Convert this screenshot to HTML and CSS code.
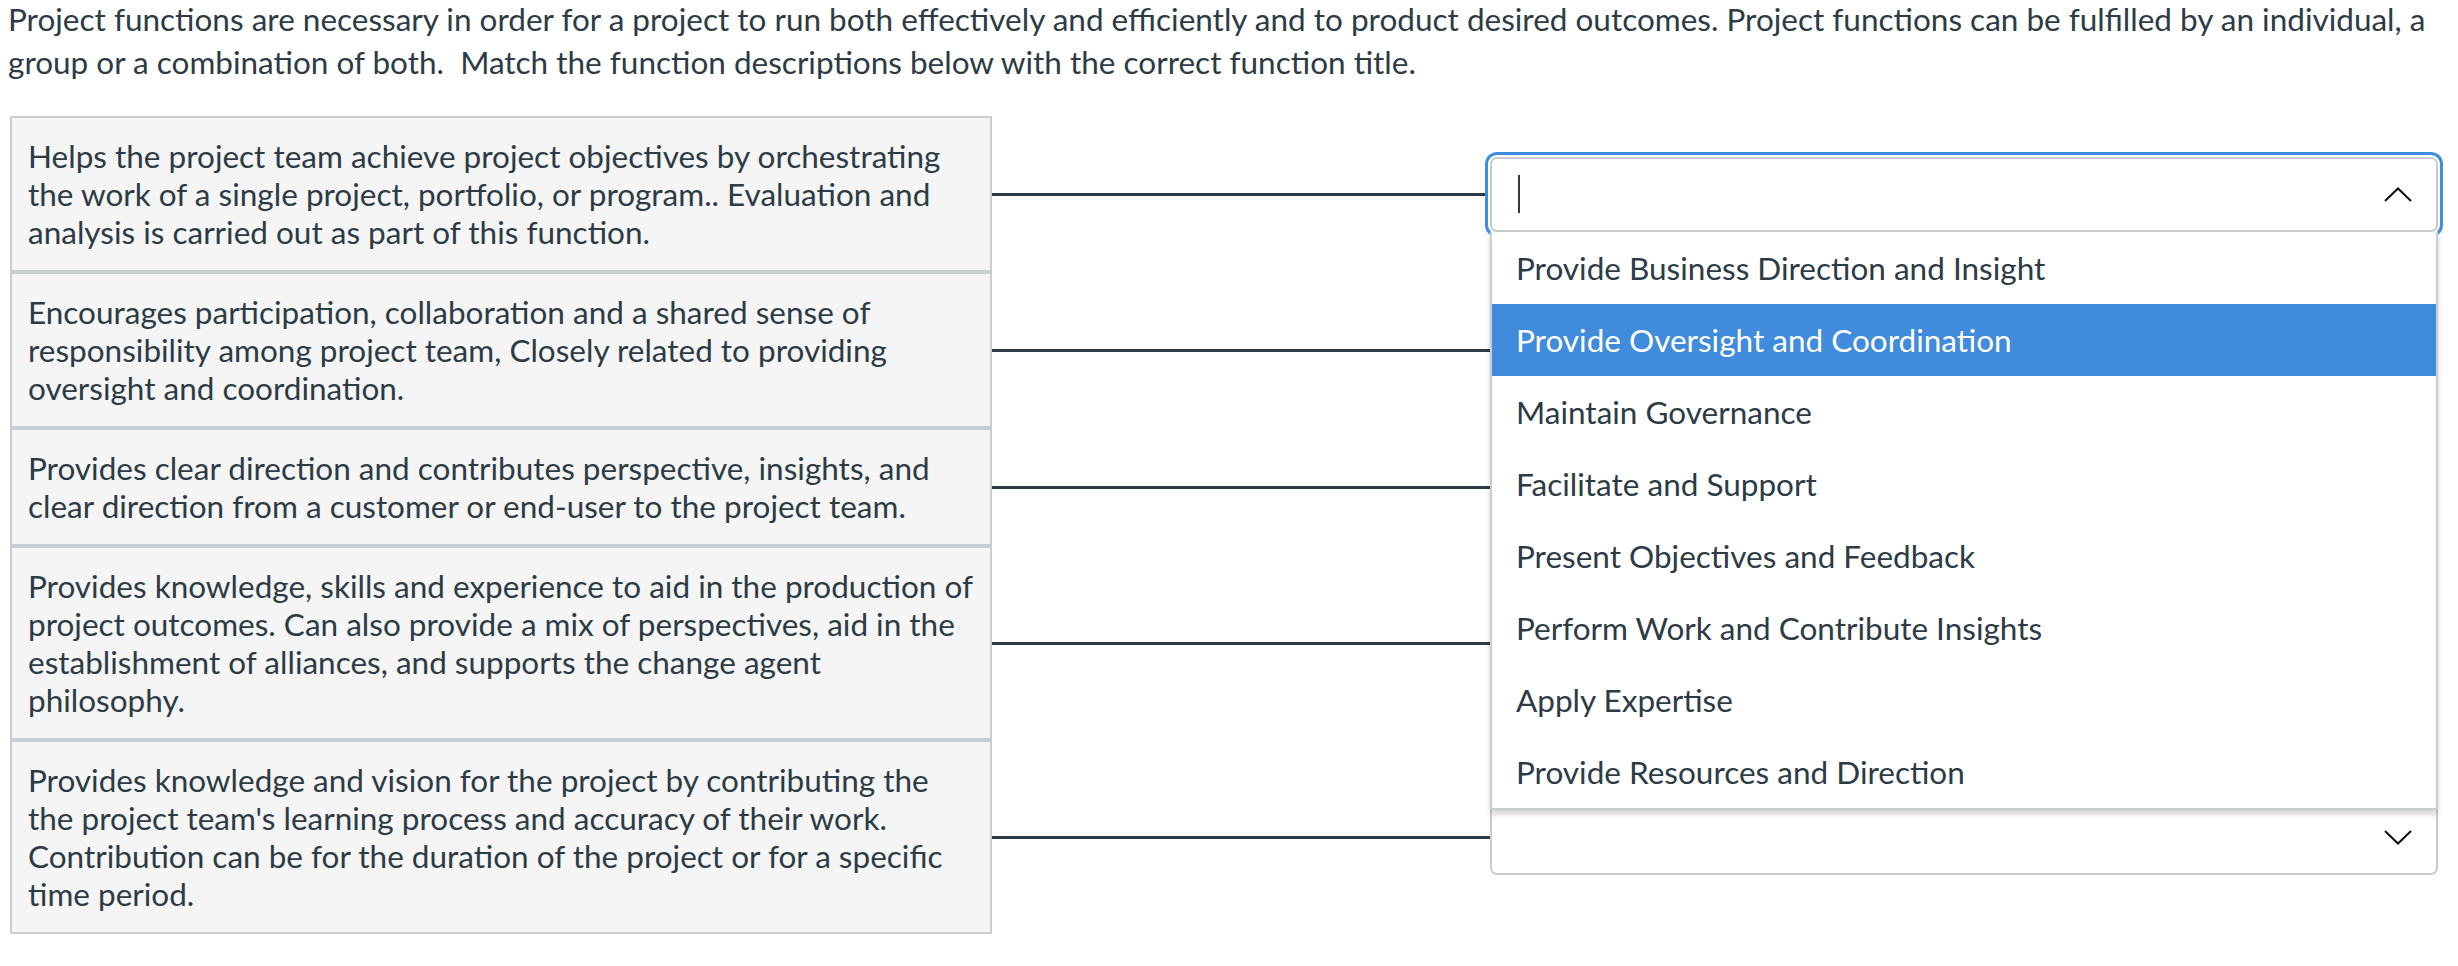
FILE: index.html
```html
<!DOCTYPE html>
<html lang="en">
<head>
  <meta charset="UTF-8" />
  <title>Matching Question</title>
  <link rel="stylesheet" href="styles.css">
</head>
<body>

  <p class="question-text">
    Project functions are necessary in order for a project to run both effectively and efficiently and to product desired outcomes. Project functions can be fulfilled by an individual, a group or a combination of both.&nbsp; Match the function descriptions below with the correct function title.
  </p>

  <div class="matches">
    <div class="match-row">
      <div class="match-left">Helps the project team achieve project objectives by orchestrating the work of a single project, portfolio, or program.. Evaluation and analysis is carried out as part of this function.</div>
      <div class="match-line"></div>
      <div class="match-right">
        <div class="combo is-focused">
          <span class="caret"></span>
          <svg class="chevron" width="28" height="15" viewBox="0 0 28 15"><polyline points="1,14 14,1.5 27,14" /></svg>
          <ul class="combo-list">
            <li>Provide Business Direction and Insight</li>
            <li class="is-active">Provide Oversight and Coordination</li>
            <li>Maintain Governance</li>
            <li>Facilitate and Support</li>
            <li>Present Objectives and Feedback</li>
            <li>Perform Work and Contribute Insights</li>
            <li>Apply Expertise</li>
            <li>Provide Resources and Direction</li>
          </ul>
        </div>
      </div>
    </div>

    <div class="match-row">
      <div class="match-left">Encourages participation, collaboration and a shared sense of responsibility among project team, Closely related to providing oversight and coordination.</div>
      <div class="match-line"></div>
      <div class="match-right">
        <div class="combo">
          <svg class="chevron" width="28" height="15" viewBox="0 0 28 15"><polyline points="1,1 14,13.5 27,1" /></svg>
        </div>
      </div>
    </div>

    <div class="match-row">
      <div class="match-left">Provides clear direction and contributes perspective, insights, and clear direction from a customer or end-user to the project team.</div>
      <div class="match-line"></div>
      <div class="match-right">
        <div class="combo">
          <svg class="chevron" width="28" height="15" viewBox="0 0 28 15"><polyline points="1,1 14,13.5 27,1" /></svg>
        </div>
      </div>
    </div>

    <div class="match-row">
      <div class="match-left">Provides knowledge, skills and experience to aid in the production of project outcomes. Can also provide a mix of perspectives, aid in the establishment of alliances, and supports the change agent philosophy.</div>
      <div class="match-line"></div>
      <div class="match-right">
        <div class="combo">
          <svg class="chevron" width="28" height="15" viewBox="0 0 28 15"><polyline points="1,1 14,13.5 27,1" /></svg>
        </div>
      </div>
    </div>

    <div class="match-row">
      <div class="match-left">Provides knowledge and vision for the project by contributing the the project team's learning process and accuracy of their work. Contribution can be for the duration of the project or for a specific time period.</div>
      <div class="match-line"></div>
      <div class="match-right">
        <div class="combo">
          <svg class="chevron" width="28" height="15" viewBox="0 0 28 15"><polyline points="1,1 14,13.5 27,1" /></svg>
        </div>
      </div>
    </div>
  </div>

</body>
</html>
```

FILE: styles.css
```css
body {
  font-family: Lato, 'Noto Sans', sans-serif;
  font-size: 31.5px;
  color: #2d3b45;
  background-color: #fff;
  margin: 0;
  padding: 0 12px 0 8px;
}

.question-text {
  margin: -2px 0 32px;
  line-height: 43px;
}

.matches {
  margin: 0 8px 0 2px;
}

.match-row {
  display: flex;
  align-items: center;
}

.match-left {
  flex: none;
  width: 982px;
  box-sizing: border-box;
  background-color: #f5f5f5;
  border: 2px solid #c7cdd1;
  padding: 19px 12px 19px 16px;
  line-height: 38px;
}

.match-line {
  flex: 1;
  height: 3px;
  background-color: #2d3b45;
}

.match-right {
  flex: none;
  width: 948px;
}

.combo {
  position: relative;
  height: 75px;
  box-sizing: border-box;
  border: 2px solid #c7cdd1;
  border-radius: 7px;
  background: #fff;
  display: flex;
  align-items: center;
  padding: 0 24px 0 26px;
}

.combo.is-focused {
  box-shadow: 0 0 0 2px #fff, 0 0 0 5px #3f8de0;
}

.caret {
  width: 2px;
  height: 38px;
  background-color: #2d3b45;
}

.chevron {
  margin-left: auto;
}

.chevron polyline {
  fill: none;
  stroke: #111;
  stroke-width: 2;
}

.combo-list {
  position: absolute;
  top: calc(100% + 2px);
  left: -2px;
  right: -2px;
  z-index: 5;
  margin: 0;
  padding: 0;
  list-style: none;
  background: #fff;
  border: 2px solid #c7cdd1;
  border-top: none;
  box-shadow: 0 4px 6px rgba(0, 0, 0, 0.18);
}

.combo-list li {
  height: 72px;
  line-height: 72px;
  padding: 0 24px;
}

.combo-list li.is-active {
  background-color: #418bdc;
  color: #fff;
}
```
